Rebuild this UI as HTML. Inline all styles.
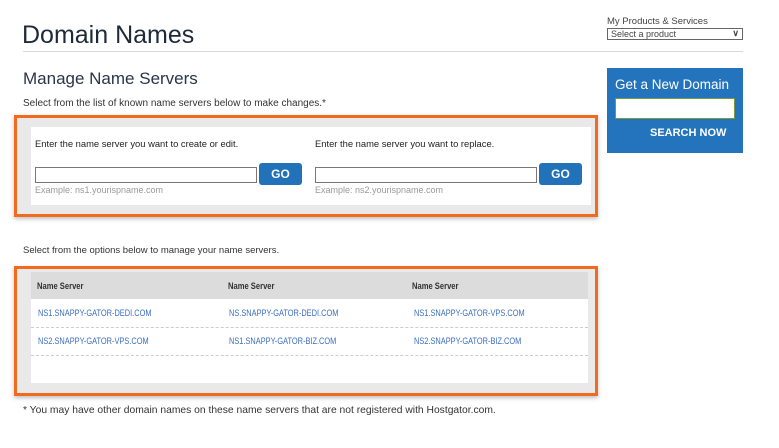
<!DOCTYPE html>
<html><head><meta charset="utf-8"><style>
*{margin:0;padding:0;box-sizing:border-box}
body{width:779px;height:448px;background:#fff;font-family:"Liberation Sans",Arial,sans-serif;color:#333;position:relative;overflow:hidden}
.a{position:absolute;white-space:nowrap}
.ob{position:absolute;border:3px solid #f26b1d;background:#e9e9e9;box-shadow:0 2px 4px rgba(0,0,0,.25)}
.inp{position:absolute;border:1px solid #777;background:#fff;height:16px}
.go{position:absolute;background:#2272b9;color:#fff;font-weight:bold;font-size:12px;border-radius:3px;width:43px;height:22px;line-height:22px;text-align:center}
.lbl{font-size:9.4px;color:#222}
.ex{font-size:9px;color:#999}
.lk{font-size:9.5px;color:#3a6ec0;transform:scaleX(.78);transform-origin:left}
.hd{font-size:9.5px;font-weight:bold;color:#333;transform:scaleX(.8);transform-origin:left}
.dash{position:absolute;left:0;right:0;border-top:1px dashed #ccc}
</style></head><body>
<div class="a" style="left:22px;top:21px;font-size:25px;color:#1e2a3a">Domain Names</div>
<div class="a" style="left:23px;top:51px;width:720px;border-top:1px solid #d8d8d8"></div>
<div class="a" style="left:23px;top:69px;font-size:17px;color:#2a3548">Manage Name Servers</div>
<div class="a" style="left:23px;top:98px;font-size:10px;color:#333">Select from the list of known name servers below to make changes.*</div>

<div class="ob" style="left:14px;top:115px;width:584px;height:102px">
  <div class="a" style="left:14px;top:9px;width:560px;height:78px;background:#fff"></div>
  <div class="a lbl" style="left:18px;top:20px">Enter the name server you want to create or edit.</div>
  <div class="inp" style="left:18px;top:49px;width:222px"></div>
  <div class="go" style="left:242px;top:45px">GO</div>
  <div class="a ex" style="left:18px;top:67px">Example: ns1.yourispname.com</div>
  <div class="a lbl" style="left:298px;top:20px">Enter the name server you want to replace.</div>
  <div class="inp" style="left:298px;top:49px;width:222px"></div>
  <div class="go" style="left:522px;top:45px">GO</div>
  <div class="a ex" style="left:298px;top:67px">Example: ns2.yourispname.com</div>
</div>

<div class="a" style="left:607px;top:16px;font-size:9.5px;color:#444">My Products &amp; Services</div>
<div class="a" style="left:607px;top:28px;width:136px;height:12px;border:1px solid #666;font-size:9px;color:#444;line-height:10px;padding-left:3px">Select a product<span style="position:absolute;right:3px;top:-1px;font-size:9px;font-weight:bold">&#x2228;</span></div>
<div class="a" style="left:607px;top:68px;width:136px;height:85px;background:#2474bd">
  <div class="a" style="left:8px;top:9px;font-size:13.5px;color:#fff">Get a New Domain</div>
  <div class="a" style="left:8px;top:30px;width:120px;height:21px;background:#fff;border:1px solid #7a9a3a"></div>
  <div class="a" style="left:43px;top:59px;font-size:11px;font-weight:bold;color:#fff">SEARCH NOW</div>
</div>

<div class="a" style="left:23px;top:245px;font-size:9.5px;color:#333">Select from the options below to manage your name servers.</div>
<div class="ob" style="left:14px;top:266px;width:584px;height:130px">
  <div class="a" style="left:14px;top:3px;width:557px;height:111px;background:#fff">
    <div class="a" style="left:0;top:0;width:557px;height:27px;background:#dcdcdc"></div>
    <div class="a hd" style="left:6px;top:9px">Name Server</div>
    <div class="a hd" style="left:197px;top:9px">Name Server</div>
    <div class="a hd" style="left:381px;top:9px">Name Server</div>
    <div class="a lk" style="left:7px;top:36px">NS1.SNAPPY-GATOR-DEDI.COM</div>
    <div class="a lk" style="left:198px;top:36px">NS.SNAPPY-GATOR-DEDI.COM</div>
    <div class="a lk" style="left:383px;top:36px">NS1.SNAPPY-GATOR-VPS.COM</div>
    <div class="dash" style="top:55px"></div>
    <div class="a lk" style="left:7px;top:64px">NS2.SNAPPY-GATOR-VPS.COM</div>
    <div class="a lk" style="left:198px;top:64px">NS1.SNAPPY-GATOR-BIZ.COM</div>
    <div class="a lk" style="left:383px;top:64px">NS2.SNAPPY-GATOR-BIZ.COM</div>
    <div class="dash" style="top:83px"></div>
  </div>
</div>
<div class="a" style="left:23px;top:405px;font-size:10.3px;color:#333">* You may have other domain names on these name servers that are not registered with Hostgator.com.</div>
</body></html>
